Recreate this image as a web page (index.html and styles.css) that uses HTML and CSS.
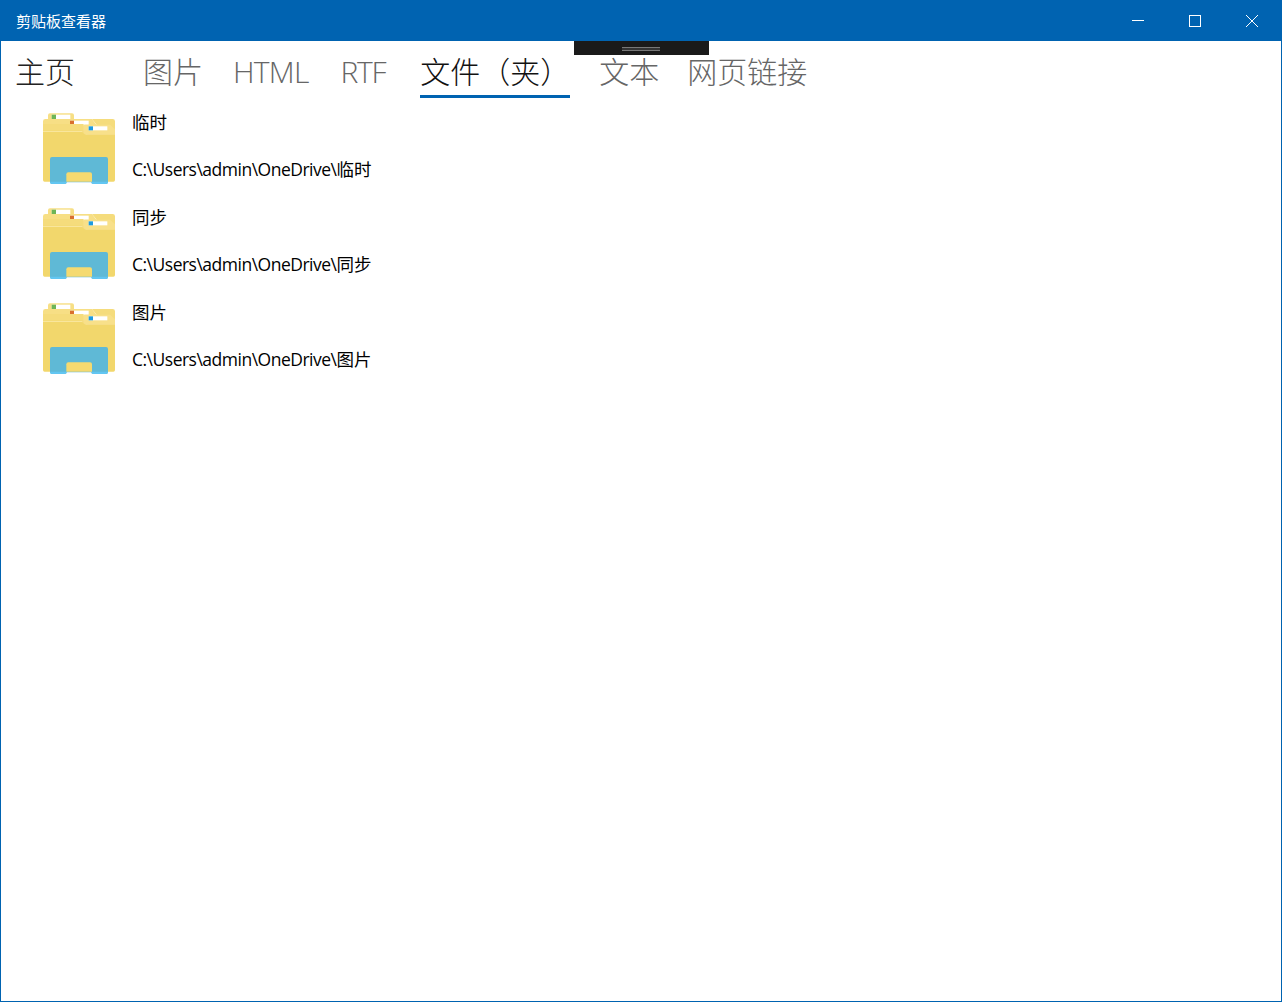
FILE: index.html
```html
<!DOCTYPE html>
<html lang="zh-CN">
<head>
<meta charset="utf-8">
<title>剪贴板查看器</title>
<link rel="stylesheet" href="styles.css">
</head>
<body>
<div class="window">
  <header class="titlebar">
    <span class="app-title">剪贴板查看器</span>
    <div class="controls">
      <div class="ctrl"><svg width="12" height="12" viewBox="0 0 12 12"><path d="M0 5.5H12" stroke="#fff" fill="none"/></svg></div>
      <div class="ctrl"><svg width="12" height="12" viewBox="0 0 12 12"><rect x="0.5" y="0.5" width="11" height="11" stroke="#fff" fill="none"/></svg></div>
      <div class="ctrl"><svg width="12" height="12" viewBox="0 0 12 12"><path d="M0 0L12 12M12 0L0 12" stroke="#fff" stroke-width="1" fill="none"/></svg></div>
    </div>
  </header>
  <div class="handle"><span class="grip"></span></div>
  <nav class="tabs">
    <span class="tab home">主页</span>
    <span class="tab">图片</span>
    <span class="tab tab-html">HTML</span>
    <span class="tab tab-rtf">RTF</span>
    <span class="tab active">文件（夹）</span>
    <span class="tab tab-text">文本</span>
    <span class="tab last">网页链接</span>
  </nav>
  <main class="list">
    <div class="row">
      <svg class="folder" viewBox="30 30 240 225"><use href="#folder"/></svg>
      <div class="info"><span>临时</span><span><span class="path">C:\Users\admin\OneDrive\</span>临时</span></div>
    </div>
    <div class="row">
      <svg class="folder" viewBox="30 30 240 225"><use href="#folder"/></svg>
      <div class="info"><span>同步</span><span><span class="path">C:\Users\admin\OneDrive\</span>同步</span></div>
    </div>
    <div class="row">
      <svg class="folder" viewBox="30 30 240 225"><use href="#folder"/></svg>
      <div class="info"><span>图片</span><span><span class="path">C:\Users\admin\OneDrive\</span>图片</span></div>
    </div>
  </main>
</div>
<svg class="defs" width="0" height="0">
  <defs>
    <g id="folder">
      <path d="M54 46Q54 40 60 40H126Q132 40 132 46V60H54Z" fill="#f7df85"/>
      <rect x="65" y="44" width="56" height="13" fill="#fff"/>
      <rect x="65" y="44" width="13" height="13" fill="#6db556"/>
      <path d="M39 64Q39 57 46 57H106Q112 57 112 63V72H39Z" fill="#f7df85"/>
      <path d="M108 63Q108 57 114 57H186L200 76H108Z" fill="#f7df85"/>
      <rect x="120" y="62" width="56" height="12" fill="#fff"/>
      <rect x="120" y="62" width="12" height="12" fill="#d9702f"/>
      <path d="M39 72H160L170 104H39Z" fill="#f5dc7c"/>
      <path d="M186 57H248Q255 57 255 64V104H172L160 92V78L200 74Z" fill="#f5dc7c"/>
      <path d="M160 78Q160 74 166 74H240L255 88V104H172Q160 104 160 92Z" fill="#f8e08a"/>
      <rect x="176" y="79" width="56" height="12" fill="#fff"/>
      <rect x="176" y="79" width="13" height="12" fill="#1e9be0"/>
      <path d="M39 92H154Q160 104 172 104H255V240Q255 245 250 245H44Q39 245 39 240Z" fill="#f2d76c"/>
      <path d="M39 93H156L158 96H39Z" fill="#f9e69c"/>
      <path d="M60 177Q60 171 66 171H228Q234 171 234 177V247Q234 252 228 252H190Q184 252 184 247H110Q110 252 104 252H66Q60 252 60 247Z" fill="#5fb9d6"/>
      <path d="M60 245H110Q110 252 104 252H66Q60 252 60 245ZM184 245H234Q234 252 228 252H190Q184 252 184 245Z" fill="#62c6f2"/>
      <path d="M109 223Q109 217 115 217H180Q186 217 186 223V245H109Z" fill="#f5da70"/>
    </g>
  </defs>
</svg>
</body>
</html>
```
FILE: styles.css
```css
* { box-sizing: border-box; }
html, body { margin: 0; padding: 0; height: 100%; overflow: hidden; background: #fff; }
body { font-family: "Open Sans", "Noto Sans CJK SC", sans-serif; }
.defs { position: absolute; }
.window {
  position: relative;
  height: 1002px;
  border: 1px solid #0063b1;
  border-top: 0;
  display: flex;
  flex-direction: column;
}
.titlebar {
  height: 41px;
  flex: none;
  background: #0063b1;
  color: #fff;
  display: flex;
  align-items: center;
  justify-content: space-between;
  padding-left: 15px;
}
.app-title { font-size: 15px; line-height: 20px; }
.controls { display: flex; align-self: stretch; padding-right: 1px; }
.ctrl { width: 57px; display: flex; align-items: center; justify-content: center; }
.ctrl svg { display: block; }
.handle {
  position: absolute;
  left: 573px;
  top: 41px;
  width: 135px;
  height: 14px;
  background: #1a1a1a;
  display: flex;
  justify-content: center;
  padding: 6px 1px 0 0;
}
.grip {
  display: block;
  width: 38px;
  height: 4px;
  border-top: 1px solid #777;
  border-bottom: 1px solid #777;
  background: #333;
}
.tabs {
  display: flex;
  height: 57px;
  flex: none;
  padding-left: 14px;
  gap: 30px;
}
.tab {
  font-size: 30px;
  line-height: 62px;
  height: 57px;
  font-weight: 300;
  color: #666;
  white-space: nowrap;
}
.tab.home { color: #222; margin-right: 38px; }
.tab.tab-html { letter-spacing: -0.75px; }
.tab.tab-rtf { letter-spacing: -1.33px; margin-left: 2px; }
.tab.active { color: #111; border-bottom: 3px solid #0063b1; margin-left: 5px; }
.tab.tab-text { margin-left: -1px; }
.tab.last { margin-left: -2px; }
.list { padding-top: 12px; display: flex; flex-direction: column; }
.row { display: flex; height: 95px; padding-left: 39px; }
.folder { width: 80px; height: 75px; flex: none; }
.info {
  display: flex;
  flex-direction: column;
  gap: 23px;
  margin-left: 12px;
  font-size: 17.5px;
  line-height: 24px;
  color: #000;
}
.path { letter-spacing: -0.5px; }
```
